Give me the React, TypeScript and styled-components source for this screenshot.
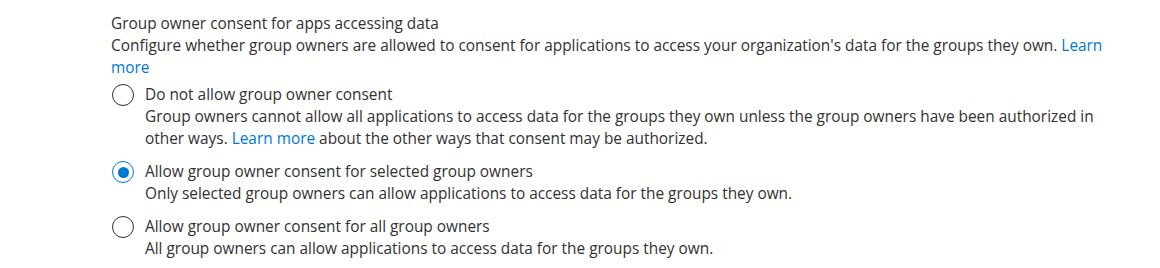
import React, { useState } from "react";
import styled, { createGlobalStyle } from "styled-components";

const GlobalStyle = createGlobalStyle`
  html, body {
    margin: 0;
    padding: 0;
    background: #ffffff;
  }
  body {
    font-family: "Segoe UI", "Open Sans", "Liberation Sans", sans-serif;
    font-size: 15.4px;
    color: #323130;
  }
`;

const Section = styled.div`
  width: 1000px;
  padding: 13px 0 0 111px;
  line-height: 22px;
`;

const Title = styled.div``;

const Description = styled.div``;

const Link = styled.a`
  color: #0078d4;
  text-decoration: none;
`;

const Options = styled.div`
  display: flex;
  flex-direction: column;
  gap: 11px;
  margin-top: 5px;
`;

const Option = styled.div`
  display: flex;
  align-items: flex-start;
  cursor: pointer;
`;

const Radio = styled.span<{ $checked: boolean }>`
  flex: none;
  box-sizing: border-box;
  width: 22px;
  height: 22px;
  margin: 0 11px 0 1px;
  border-radius: 50%;
  border: 1px solid ${(p) => (p.$checked ? "#0078d4" : "#323130")};
  display: flex;
  align-items: center;
  justify-content: center;

  &::after {
    content: "";
    width: 11px;
    height: 11px;
    border-radius: 50%;
    background: #0078d4;
    display: ${(p) => (p.$checked ? "block" : "none")};
  }
`;

const OptionText = styled.div`
  display: flex;
  flex-direction: column;
`;

const OptionLabel = styled.div``;

const OptionDesc = styled.div``;

const options = [
  {
    id: "none",
    label: "Do not allow group owner consent",
    desc: (
      <>
        Group owners cannot allow all applications to access data for the groups they own unless the group
        owners have been authorized in other ways. <Link href="#">Learn more</Link> about the other ways that
        consent may be authorized.
      </>
    ),
  },
  {
    id: "selected",
    label: "Allow group owner consent for selected group owners",
    desc: <>Only selected group owners can allow applications to access data for the groups they own.</>,
  },
  {
    id: "all",
    label: "Allow group owner consent for all group owners",
    desc: <>All group owners can allow applications to access data for the groups they own.</>,
  },
];

const App = () => {
  const [value, setValue] = useState("selected");

  return (
    <>
      <GlobalStyle />
      <Section>
        <Title>Group owner consent for apps accessing data</Title>
        <Description>
          Configure whether group owners are allowed to consent for applications to access your organization's
          data for the groups they own. <Link href="#">Learn more</Link>
        </Description>
        <Options>
          {options.map((o) => (
            <Option key={o.id} onClick={() => setValue(o.id)}>
              <Radio $checked={value === o.id} />
              <OptionText>
                <OptionLabel>{o.label}</OptionLabel>
                <OptionDesc>{o.desc}</OptionDesc>
              </OptionText>
            </Option>
          ))}
        </Options>
      </Section>
    </>
  );
};

export default App;
